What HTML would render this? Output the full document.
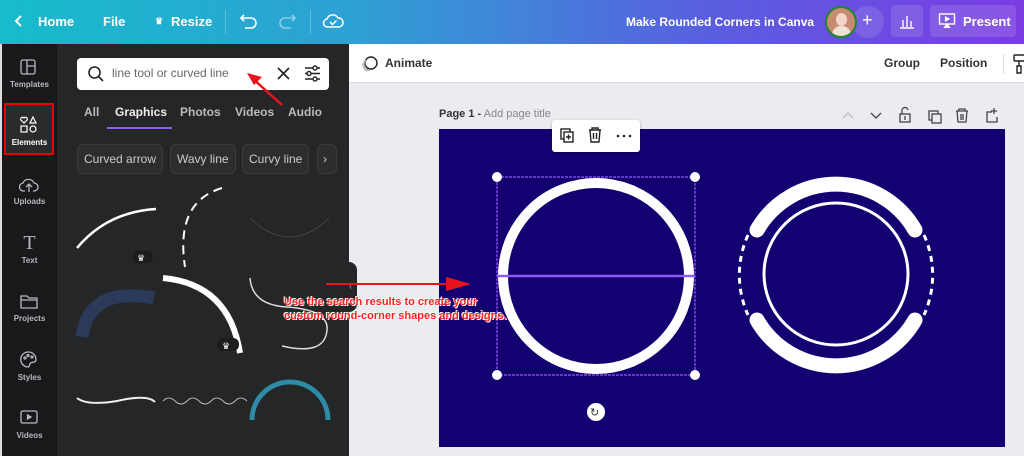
<!DOCTYPE html>
<html><head><meta charset="utf-8"><style>
*{margin:0;padding:0;box-sizing:border-box}
body{width:1024px;height:456px;overflow:hidden;font-family:"Liberation Sans",sans-serif;background:#ebecf0;position:relative}
.top{position:absolute;left:0;top:0;width:1024px;height:44px;background:linear-gradient(90deg,#16bccb 0%,#2fa0d4 35%,#5a5de0 70%,#7b3ce2 100%);color:#fff;font-weight:bold;font-size:13px}
.top span{position:absolute;top:14px}
.side{position:absolute;left:2px;top:44px;width:55px;height:412px;background:#18191b}
.side div{position:absolute;left:0;width:55px;text-align:center;color:#b8b9bc;font-size:8px;font-weight:bold}
.panel{position:absolute;left:57px;top:44px;width:292px;height:412px;background:#252627}
.tb{position:absolute;left:349px;top:44px;width:675px;height:39px;background:#fff;border-bottom:1px solid #ddd;font-size:12px;font-weight:bold;color:#333}
.chip{position:absolute;top:144px;height:30px;border:1px solid #3a3b3d;background:#2c2d2f;border-radius:6px;color:#ccc;font-size:12px;line-height:28px;padding:0 6px}
.tab{position:absolute;top:105px;font-size:12px;font-weight:bold;color:#bbb}
</style></head><body>
<div class="top">
<svg style="position:absolute;left:14px;top:14px" width="10" height="14"><path d="M7 2L2 7L7 12" stroke="#fff" stroke-width="2" fill="none"/></svg>
<span style="left:38px">Home</span><span style="left:103px">File</span>
<span style="left:155px;font-size:9px;top:16px">♛</span><span style="left:171px">Resize</span>
<div style="position:absolute;left:225px;top:10px;width:1px;height:24px;background:rgba(255,255,255,.25)"></div>
<svg style="position:absolute;left:240px;top:12px" width="18" height="18"><path d="M4 3L1 6L4 9M1 6H11A5 5 0 0 1 11 16H5" stroke="#fff" stroke-width="1.6" fill="none"/></svg>
<svg style="position:absolute;left:278px;top:12px" width="18" height="18"><path d="M14 3L17 6L14 9M17 6H7A5 5 0 0 0 7 16H13" stroke="rgba(255,255,255,.45)" stroke-width="1.6" fill="none"/></svg>
<div style="position:absolute;left:310px;top:10px;width:1px;height:24px;background:rgba(255,255,255,.25)"></div>
<svg style="position:absolute;left:322px;top:11px" width="22" height="20"><path d="M6 16A4 4 0 0 1 5 8A6 6 0 0 1 16 7A4.5 4.5 0 0 1 17 16Z" stroke="#fff" stroke-width="1.5" fill="none"/><path d="M8 11L10.5 13.5L14.5 9.5" stroke="#fff" stroke-width="1.5" fill="none"/></svg>
<span style="left:626px;font-size:12px;top:15px">Make Rounded Corners in Canva</span>
<div style="position:absolute;left:852px;top:6px;width:32px;height:32px;border-radius:50%;background:rgba(255,255,255,.12)"></div>
<span style="left:862px;font-size:18px;top:10px;font-weight:normal">+</span>
<div style="position:absolute;left:825px;top:6px;width:32px;height:32px;border-radius:50%;background:#c98a74;border:2px solid #1b8a2a;overflow:hidden"><div style="position:absolute;left:9px;top:5px;width:11px;height:13px;border-radius:50%;background:#f2d6c8"></div><div style="position:absolute;left:5px;top:18px;width:19px;height:10px;border-radius:9px 9px 0 0;background:#efe2d6"></div></div>
<div style="position:absolute;left:891px;top:5px;width:32px;height:32px;border-radius:4px;background:rgba(255,255,255,.12)"></div>
<svg style="position:absolute;left:899px;top:13px" width="16" height="16"><path d="M1 15H15M4 14V7M8 14V3M12 14V8" stroke="#fff" stroke-width="1.4"/></svg>
<div style="position:absolute;left:930px;top:5px;width:86px;height:32px;border-radius:4px;background:rgba(255,255,255,.12)"></div>
<svg style="position:absolute;left:938px;top:12px" width="18" height="18"><rect x="1.5" y="2" width="15" height="10" stroke="#fff" stroke-width="1.4" fill="none"/><path d="M7.5 5L11 7L7.5 9Z M6 16L9 12L12 16" fill="#fff" stroke="#fff" stroke-width="1.2"/></svg>
<span style="left:963px">Present</span>
</div>
<div style="position:absolute;left:0;top:44px;width:2px;height:412px;background:#ddd"></div>
<div class="side">
<svg style="position:absolute;left:18px;top:15px" width="16" height="16"><rect x="1" y="1" width="14" height="14" rx="2" stroke="#b8b9bc" stroke-width="1.3" fill="none"/><path d="M7 1V15M7 7H15" stroke="#b8b9bc" stroke-width="1.3"/></svg>
<div style="top:36px">Templates</div>
<div style="top:59px;left:2px;width:50px;height:52px;border:2px solid #e00;background:#2a2b2d"></div>
<svg style="position:absolute;left:18px;top:72px" width="18" height="18" fill="none" stroke="#fff" stroke-width="1.2"><path d="M4 7L1 4A1.6 1.6 0 0 1 4 2A1.6 1.6 0 0 1 7 4Z"/><path d="M13 1L16 7H10Z"/><rect x="1" y="10" width="6" height="6"/><circle cx="13" cy="13" r="3"/></svg>
<div style="top:94px;color:#fff">Elements</div>
<svg style="position:absolute;left:17px;top:133px" width="20" height="16" fill="none" stroke="#b8b9bc" stroke-width="1.3"><path d="M6 14H5A4 4 0 0 1 4 6A6 6 0 0 1 15 6A4 4 0 0 1 15 14H14M10 15V8M7 10L10 7L13 10"/></svg>
<div style="top:153px">Uploads</div>
<div style="top:188px;font-size:20px;font-family:'Liberation Serif',serif;font-weight:normal">T</div>
<div style="top:212px">Text</div>
<svg style="position:absolute;left:18px;top:250px" width="18" height="15" fill="none" stroke="#b8b9bc" stroke-width="1.3"><path d="M1 2H7L9 4H17V14H1Z M1 6H17"/></svg>
<div style="top:270px">Projects</div>
<svg style="position:absolute;left:18px;top:307px" width="17" height="17" fill="none" stroke="#b8b9bc" stroke-width="1.3"><path d="M8.5 1A7.5 7.5 0 1 0 8 16C10 16 9 13 10.5 12C12 11 16 12 16 8.5A7.5 7.5 0 0 0 8.5 1Z"/><circle cx="5" cy="7" r="1"/><circle cx="8" cy="4.5" r="1"/><circle cx="12" cy="6" r="1"/></svg>
<div style="top:329px">Styles</div>
<svg style="position:absolute;left:18px;top:366px" width="18" height="14" fill="none" stroke="#b8b9bc" stroke-width="1.3"><rect x="1" y="1" width="16" height="12" rx="1.5"/><path d="M7.5 5L11 7L7.5 9Z" fill="#b8b9bc"/></svg>
<div style="top:387px">Videos</div>
</div>
<div class="panel"></div>
<div style="position:absolute;left:77px;top:58px;width:252px;height:32px;background:#fff;border-radius:4px"></div>
<svg style="position:absolute;left:87px;top:65px" width="18" height="18" fill="none" stroke="#222" stroke-width="1.6"><circle cx="7.5" cy="7.5" r="5.5"/><path d="M11.5 11.5L16 16"/></svg>
<div style="position:absolute;left:112px;top:66px;font-size:12px;color:#666">line tool or curved line</div>
<svg style="position:absolute;left:277px;top:67px" width="13" height="13" stroke="#222" stroke-width="1.6"><path d="M1 1L12 12M12 1L1 12"/></svg>
<svg style="position:absolute;left:304px;top:65px" width="17" height="17" fill="#fff" stroke="#222" stroke-width="1.4"><path d="M1 3H16M1 8.5H16M1 14H16"/><circle cx="11" cy="3" r="2"/><circle cx="5" cy="8.5" r="2"/><circle cx="11" cy="14" r="2"/></svg>
<div class="tab" style="left:84px">All</div><div class="tab" style="left:115px;color:#eee">Graphics</div><div class="tab" style="left:180px">Photos</div><div class="tab" style="left:235px">Videos</div><div class="tab" style="left:288px">Audio</div>
<div style="position:absolute;left:107px;top:127px;width:65px;height:2px;background:#8b5cf6"></div>
<div class="chip" style="left:77px">Curved arrow</div><div class="chip" style="left:170px">Wavy line</div><div class="chip" style="left:242px">Curvy line</div><div class="chip" style="left:317px;width:20px;padding:0 0 0 5px">›</div>
<svg style="position:absolute;left:57px;top:180px" width="292" height="276" fill="none">
<path d="M20 68Q50 32 99 29" stroke="#fff" stroke-width="2.5"/>
<path d="M165 8Q118 22 128 87" stroke="#fff" stroke-width="2" stroke-dasharray="9 6"/>
<path d="M193 38Q233 76 272 38" stroke="#444" stroke-width="1"/>
<rect x="75" y="71" width="21" height="12" rx="6" fill="#1b1c1e"/><text x="80" y="81" font-size="9" fill="#fff">♛</text>
<path d="M25 157Q32 106 97 118" stroke="#2c3a5a" stroke-width="13"/>
<path d="M106 98Q172 104 183 173" stroke="#fff" stroke-width="6"/>
<rect x="160" y="158" width="22" height="13" rx="6" fill="#1b1c1e"/><text x="165" y="169" font-size="9" fill="#fff">♛</text>
<path d="M193 98Q195 125 230 127Q272 130 270 150Q268 176 225 166" stroke="#ddd" stroke-width="1.5"/>
<path d="M20 218Q30 226 60 221Q90 214 98 222" stroke="#eee" stroke-width="2"/>
<path d="M106 221q6 -6 12 0t12 0t12 0t12 0t12 0t12 0t12 0" stroke="#bbb" stroke-width="1"/>
<path d="M195 240A38 38 0 0 1 271 240" stroke="#2e8aa5" stroke-width="5"/>
</svg>
<div class="tb">
<svg style="position:absolute;left:12px;top:11px" width="18" height="18" fill="none" stroke="#222" stroke-width="1.4"><circle cx="10" cy="8" r="6"/><path d="M5 5A6 6 0 0 0 9 15" stroke="#999"/><path d="M3 7A6 6 0 0 0 7 16" stroke="#bbb"/></svg>
<span style="position:absolute;left:36px;top:12px">Animate</span>
<span style="position:absolute;left:535px;top:12px">Group</span><span style="position:absolute;left:591px;top:12px">Position</span>
<div style="position:absolute;left:654px;top:10px;width:1px;height:20px;background:#ddd"></div>
<svg style="position:absolute;left:664px;top:10px" width="12" height="20" fill="none" stroke="#222" stroke-width="1.4"><rect x="1" y="1" width="11" height="6" rx="1"/><path d="M6 7V12M4 12H8V19H4Z"/></svg>
</div>
<div style="position:absolute;left:349px;top:262px;width:8px;height:50px;background:#252627;border-radius:0 8px 8px 0;color:#999;font-size:10px;line-height:50px">‹</div>
<div style="position:absolute;left:439px;top:108px;font-size:11px;color:#333"><b>Page 1 -</b> <span style="color:#888">Add page title</span></div>
<svg style="position:absolute;left:840px;top:106px" width="165" height="18" fill="none" stroke="#444" stroke-width="1.3"><path d="M3 12L8 7L13 12" stroke="#bbb"/><path d="M31 7L36 12L41 7"/><rect x="60" y="8" width="10" height="8"/><path d="M62 8V5A3 3 0 0 1 68 4M65 10V14"/><rect x="89" y="5" width="9" height="9"/><rect x="92" y="8" width="9" height="9" fill="#ebecf0"/><path d="M116 5H128M119 5V3H125V5M117 5L118 16H126L127 5M121 8V14M123 8V14"/><path d="M152 6H147V16H157V11M154 2V8M151 5H157"/></svg>
<div style="position:absolute;left:439px;top:129px;width:566px;height:318px;background:#150072"></div>
<div style="position:absolute;left:552px;top:120px;width:88px;height:32px;background:#fff;border-radius:3px;box-shadow:0 1px 3px rgba(0,0,0,.3)"></div>
<svg style="position:absolute;left:552px;top:120px" width="88" height="32" fill="none" stroke="#222" stroke-width="1.4"><rect x="9" y="9" width="9" height="10"/><rect x="12" y="12" width="9" height="10" fill="#fff"/><path d="M16.5 14.5V19.5M14 17H19"/><path d="M37 10H49M40 10V8H46V10M38 10L39 22H47L48 10M41.5 13V19M44.5 13V19"/><circle cx="66" cy="16" r="1.3" fill="#222" stroke="none"/><circle cx="72" cy="16" r="1.3" fill="#222" stroke="none"/><circle cx="78" cy="16" r="1.3" fill="#222" stroke="none"/></svg>
<svg style="position:absolute;left:439px;top:129px" width="566" height="318">
<ellipse cx="157" cy="147" rx="93" ry="93" stroke="#fff" stroke-width="10" fill="none"/>
<rect x="58" y="48" width="198" height="198" stroke="#8b5cf6" stroke-width="1.2" stroke-dasharray="3 1" fill="none"/>
<line x1="58" y1="147" x2="256" y2="147" stroke="#8b5cf6" stroke-width="2.5"/>
<g fill="#fff"><circle cx="58" cy="48" r="5"/><circle cx="256" cy="48" r="5"/><circle cx="58" cy="246" r="5"/><circle cx="256" cy="246" r="5"/></g>
<circle cx="157" cy="283" r="9" fill="#fff"/><text x="151" y="287" font-size="11" fill="#333">↻</text>
<g fill="none" stroke="#fff">
<path d="M318 101A91 91 0 0 1 476 101" stroke-width="15" stroke-linecap="round"/>
<path d="M318 191A91 91 0 0 0 476 191" stroke-width="15" stroke-linecap="round"/>
<path d="M309 106A97 97 0 0 0 309 186" stroke-width="3" stroke-dasharray="6 5"/>
<path d="M485 106A97 97 0 0 1 485 186" stroke-width="3" stroke-dasharray="6 5"/>
<ellipse cx="397" cy="145" rx="72" ry="71" stroke-width="3"/>
</g>
</svg>
<svg style="position:absolute;left:0;top:0" width="1024" height="456" fill="none">
<path d="M326 284H452" stroke="#e8131b" stroke-width="2"/><path d="M446 277L471 284L446 291Z" fill="#e8131b"/>
<path d="M282 105L252 78" stroke="#e8131b" stroke-width="2.5"/><path d="M247 73L262 77L254 85Z" fill="#e8131b"/>
</svg>
<div style="position:absolute;left:284px;top:295px;font-size:11px;font-weight:bold;color:#ff2020;line-height:14px;text-shadow:0 0 1px #fff,1px 1px 0 #fff,-1px -1px 0 #fff">Use the search results to create your<br>custom round-corner shapes and designs.</div>
</body></html>
